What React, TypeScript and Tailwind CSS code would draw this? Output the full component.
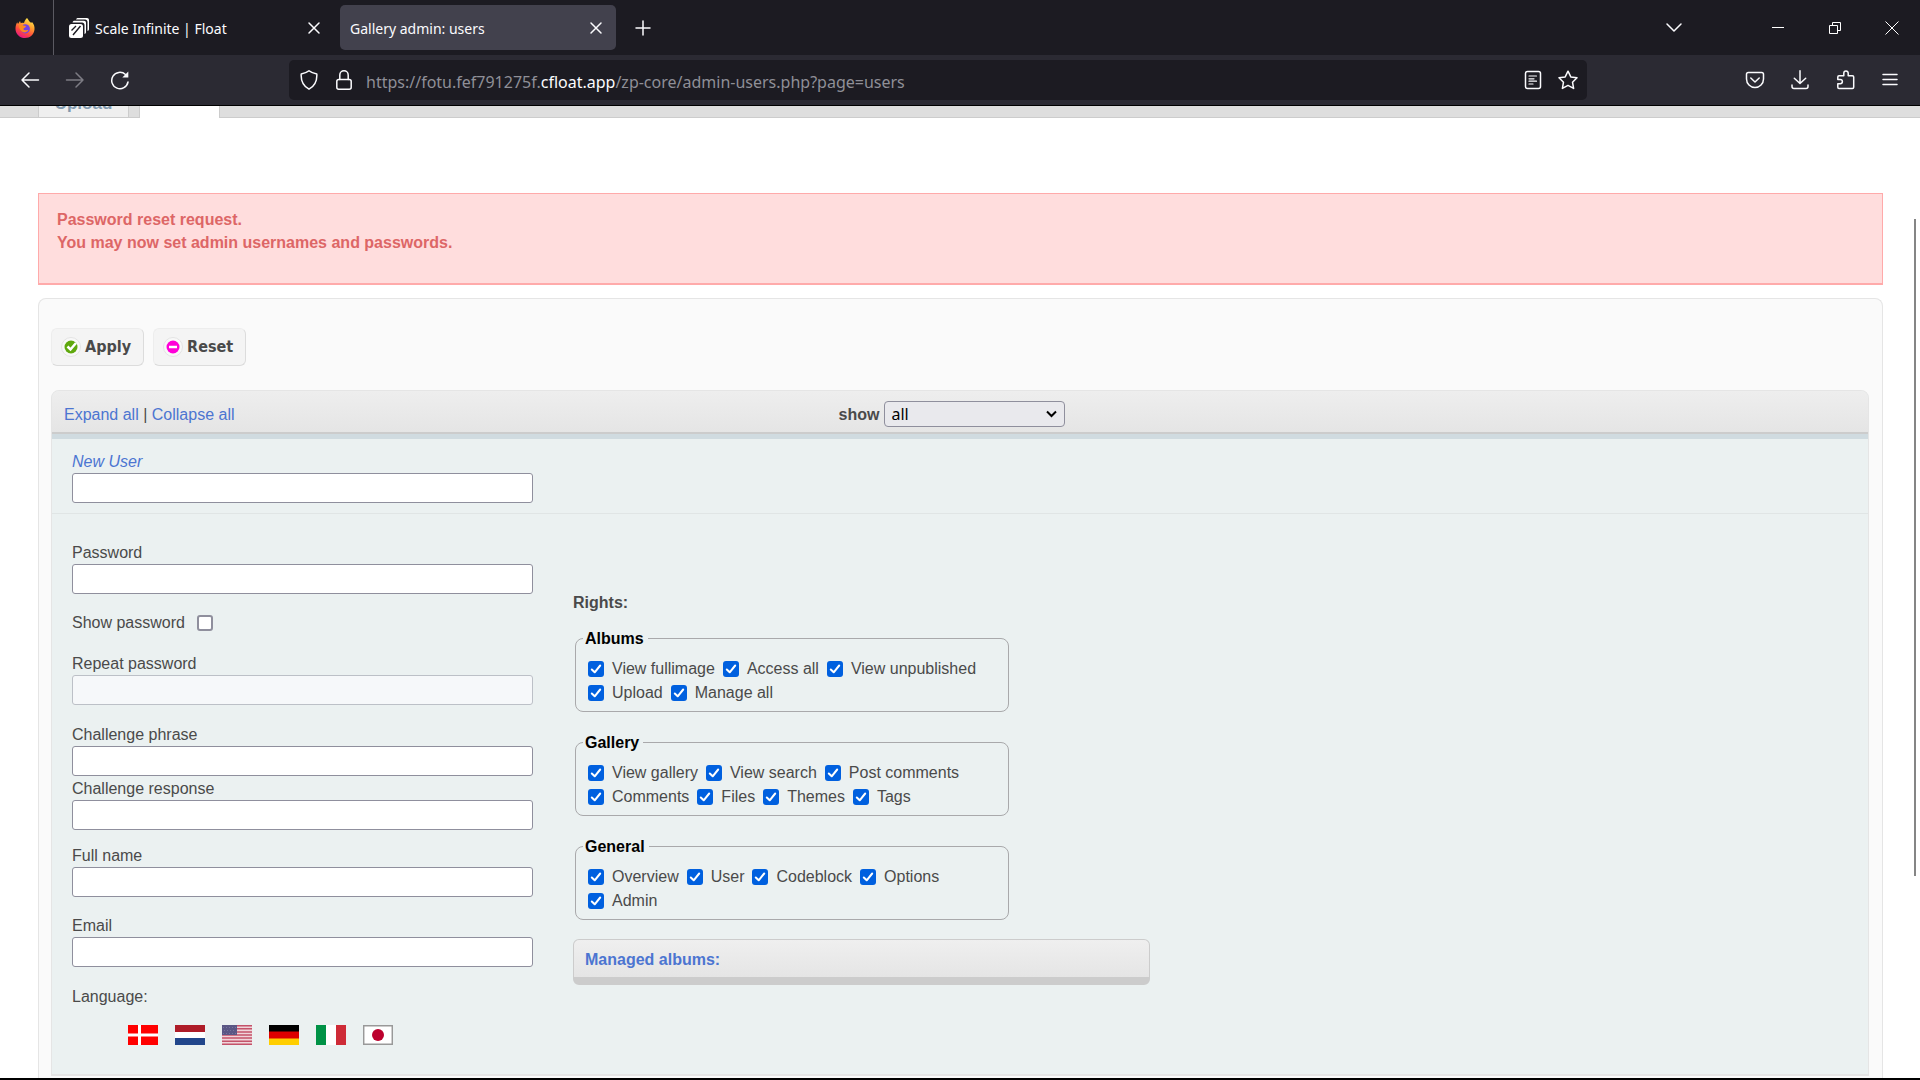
import { useState } from "react";
import type { ReactNode } from "react";

const rights = [
  { title: "Albums", items: ["View fullimage", "Access all", "View unpublished", "Upload", "Manage all"] },
  {
    title: "Gallery",
    items: ["View gallery", "View search", "Post comments", "Comments", "Files", "Themes", "Tags"],
  },
  { title: "General", items: ["Overview", "User", "Codeblock", "Options", "Admin"] },
];

const Icon = ({ size = 20, children }: { size?: number; children: ReactNode }) => (
  <svg
    width={size}
    height={size}
    viewBox="0 0 20 20"
    fill="none"
    stroke="currentColor"
    strokeWidth="1.5"
    strokeLinecap="round"
    strokeLinejoin="round"
    aria-hidden="true"
  >
    {children}
  </svg>
);

const IconButton = ({ label, className = "", children }: { label: string; className?: string; children: ReactNode }) => (
  <button type="button" aria-label={label} className={`flex h-10 items-center justify-center ${className}`}>
    {children}
  </button>
);

const FirefoxLogo = () => (
  <svg width="20" height="20" viewBox="0 0 20 20" aria-hidden="true">
    <defs>
      <linearGradient id="fox" x1="0.8" y1="0" x2="0.3" y2="1">
        <stop offset="0" stopColor="#fff44f" />
        <stop offset="0.4" stopColor="#ff9a2e" />
        <stop offset="0.7" stopColor="#ff4a3f" />
        <stop offset="1" stopColor="#e31587" />
      </linearGradient>
    </defs>
    <path
      d="M12 0c1.300 1.400 1.600 2.800 3 4 .8.700 1.600 1 2 0 2 2.300 2.800 4.700 2.500 7.500C19 16.500 15 20 10 20S.7 16.400.5 11.200C.400 8.500 1 6 2.200 4.200L3 6l2-3 .8 2.200C7 4.700 8 4.800 9 5c.6-2 1.500-3.600 3-5z"
      fill="url(#fox)"
    />
    <circle cx="10.300" cy="10.800" r="4.600" fill="#7542e5" />
    <path d="M4 7.500c1.500-1 3-1 4.500 0l2.500.4c-.3 1.500-1.600 1.600-2.300 2.400-.5 1 .2 2 1.500 2 1 0 2-.8 3 0-1 2-3.500 2.600-5.500 1.700S4 10.500 4 7.500z" fill="#ff8a1e" />
  </svg>
);

const FloatLogo = () => (
  <svg width="20" height="20" viewBox="0 0 20 20" aria-hidden="true">
    <path d="M7 1.500C7.400.5 8 0 9 0h9c1.200 0 2 .8 2 2v9c0 1-.5 1.800-1.500 2V4c0-1.500-1-2.500-2.500-2.500z" fill="#fff" />
    <path d="M3.500 4.500c.3-1.200 1-1.700 2-1.700h9.500c1.200 0 2 .8 2 2V14c0 1-.5 1.700-1.500 2V7c0-1.500-1-2.500-2.500-2.500z" fill="#fff" />
    <rect x="0" y="6" width="14" height="14" rx="2.500" fill="#fff" />
    <path d="M4 17 11.500 8M2.500 12.500 7 8" stroke="#1c1b22" strokeWidth="1.400" />
  </svg>
);

const CloseIcon = ({ size = 20 }: { size?: number }) => (
  <Icon size={size}>
    <path d="m5 5 10 10M15 5 5 15" />
  </Icon>
);

const Browser = () => (
  <header className="shrink-0 border-b border-black font-['Noto_Sans','Open_Sans',sans-serif] text-[#fbfbfe]">
    <div className="flex h-[55px] items-center bg-[#1c1b22] text-sm">
      <div className="flex h-full w-[54px] items-center justify-center border-r border-[#5b5a62] pr-1">
        <FirefoxLogo />
      </div>
      <div className="flex h-[45px] w-[286px] items-center pl-[15px] pr-4">
        <FloatLogo />
        <span className="ml-1.5 flex-1 truncate pt-0.5">Scale Infinite | Float</span>
        <button type="button" aria-label="Close tab">
          <CloseIcon />
        </button>
      </div>
      <div className="flex h-[45px] w-[276px] items-center rounded-[5px] bg-[#42414d] pl-2.5 pr-2.5">
        <span className="flex-1 truncate pt-0.5">Gallery admin: users</span>
        <button type="button" aria-label="Close tab">
          <CloseIcon />
        </button>
      </div>
      <IconButton label="New tab" className="w-[54px]">
        <Icon>
          <path d="M10 3v14M3 10h14" />
        </Icon>
      </IconButton>
      <div className="ml-auto flex">
        <IconButton label="List all tabs" className="mr-14 w-10">
          <Icon>
            <path d="m3 6 7 7 7-7" />
          </Icon>
        </IconButton>
        <IconButton label="Minimize" className="w-14">
          <svg width="12" height="12" aria-hidden="true">
            <path d="M0 5.500h12" stroke="#fff" />
          </svg>
        </IconButton>
        <IconButton label="Restore" className="w-[58px]">
          <svg width="12" height="12" fill="none" stroke="#fff" aria-hidden="true">
            <path d="M.5 3.500h8v8h-8zM3.500 3.500v-3h8v8h-3" />
          </svg>
        </IconButton>
        <IconButton label="Close" className="w-14">
          <svg width="14" height="14" stroke="#fff" aria-hidden="true">
            <path d="m.5.5 13 13M13.500.5l-13 13" />
          </svg>
        </IconButton>
      </div>
    </div>

    <nav className="flex h-[50px] items-center bg-[#2b2a33] pl-[7px] pr-2">
      <IconButton label="Back" className="w-[45px]">
        <Icon>
          <path d="M18.500 10H2M9 3l-7 7 7 7" />
        </Icon>
      </IconButton>
      <span className="text-[#7d7c84]">
        <IconButton label="Forward" className="w-[45px]">
          <Icon>
            <path d="M1.500 10H18M11 3l7 7-7 7" />
          </Icon>
        </IconButton>
      </span>
      <IconButton label="Reload" className="w-[45px]">
        <Icon>
          <path d="M18 12a8.200 8.200 0 1 1-2.500-7.500L17 6" />
          <path d="M18.300 1.500v6h-6z" fill="currentColor" stroke="none" />
        </Icon>
      </IconButton>
      <div className="ml-[147px] mr-[146px] flex h-10 flex-1 items-center rounded-[5px] bg-[#1c1b22] pl-2.5 pr-[9px]">
        <Icon>
          <path d="M10 .800c2 1.700 4.300 2.600 7.800 3.200.4 6.500-2 12-7.800 15.200C4.200 16 1.800 10.500 2.200 4 5.700 3.400 8 2.500 10 .800z" />
        </Icon>
        <span className="ml-[15px]">
          <Icon>
            <rect x="2.800" y="9.500" width="14.400" height="9.700" rx="2" />
            <path d="M5.800 9.500V5a4.200 4.200 0 0 1 8.400 0v4.500" />
          </Icon>
        </span>
        <div
          role="textbox"
          aria-label="Address"
          tabIndex={0}
          className="ml-3 flex-1 truncate pt-[3px] text-base text-[#8f8f97]"
        >
          https://fotu.fef791275f.<span className="text-[#fbfbfe]">cfloat.app</span>/zp-core/admin-users.php?page=users
        </div>
        <IconButton label="Reader view" className="mr-[15px] w-5">
          <Icon>
            <rect x="2.500" y="1.500" width="15" height="17" rx="2" />
            <path d="M6 6h7.500M6 8.800h5M6 11.200h7.500M6 14h4" strokeWidth="1.200" />
          </Icon>
        </IconButton>
        <IconButton label="Bookmark" className="w-5">
          <Icon>
            <path d="m10 1.200 2.800 5.700 6.200.9-4.500 4.400 1.100 6.200-5.600-3-5.600 3 1.100-6.200L1 7.800l6.200-.9z" />
          </Icon>
        </IconButton>
      </div>
      <IconButton label="Pocket" className="w-11">
        <Icon>
          <path d="M3.300 2.500h13.400c1 0 1.800.8 1.800 1.800V9a8.500 8.500 0 0 1-17 0V4.300c0-1 .8-1.800 1.800-1.800z" />
          <path d="m5.800 8 4.200 4 4.200-4" />
        </Icon>
      </IconButton>
      <IconButton label="Downloads" className="w-[46px]">
        <Icon>
          <path d="M10 .8v12.500M4.300 8.200l5.700 5.300 5.700-5.300M2 15v1.500c0 1.200.8 2 2 2h12c1.200 0 2-.8 2-2V15" />
        </Icon>
      </IconButton>
      <IconButton label="Extensions" className="w-[45px]">
        <Icon>
          <path d="M3 18.500c-.8 0-1.200-.5-1.200-1.200v-3.500h2.400a2.200 2.200 0 0 0 0-4.400H1.800V7c0-.8.500-1.200 1.200-1.200h4.800V3.200a2.200 2.200 0 0 1 4.400 0v2.600h4.300c.8 0 1.200.5 1.200 1.200v10.300c0 .7-.4 1.200-1.200 1.200z" />
        </Icon>
      </IconButton>
      <IconButton label="Menu" className="w-11">
        <Icon>
          <path d="M3 4.500h14M3 9.500h14M3 14.500h14" />
        </Icon>
      </IconButton>
    </nav>
  </header>
);

const Field = ({
  id,
  label,
  type = "text",
  disabled = false,
  className = "",
}: {
  id: string;
  label: ReactNode;
  type?: string;
  disabled?: boolean;
  className?: string;
}) => (
  <div className={className}>
    <label htmlFor={id} className="block pt-0.5 leading-[22px]">
      {label}
    </label>
    <input
      id={id}
      type={type}
      disabled={disabled}
      className="block h-[30px] w-full rounded-[3px] border border-[#8f8f9d] bg-white px-1 text-black disabled:border-[#bcc0c7] disabled:bg-[#f6f8fa]"
    />
  </div>
);

const Check = ({ label }: { label: string }) => {
  const [on, setOn] = useState(true);

  return (
    <label className="flex items-center whitespace-nowrap">
      <span className="relative mr-2 flex h-4 w-4">
        <input
          type="checkbox"
          checked={on}
          onChange={() => setOn(!on)}
          className="h-4 w-4 appearance-none rounded-[3px] border-2 border-[#8f8f9d] bg-white checked:border-0 checked:bg-[#0060df]"
        />
        {on && (
          <svg
            className="pointer-events-none absolute inset-0"
            width="16"
            height="16"
            fill="none"
            stroke="#fff"
            strokeWidth="2"
            strokeLinecap="round"
            strokeLinejoin="round"
            aria-hidden="true"
          >
            <path d="M3.800 8.500 6.700 11.300 12.200 4.500" />
          </svg>
        )}
      </span>
      {label}
    </label>
  );
};

const flags = [
  {
    name: "Dansk",
    art: (
      <>
        <path fill="#f00" d="M0 0h30v20H0z" />
        <path stroke="#fff" strokeWidth="3" d="M11.500 0v20M0 10h30" />
      </>
    ),
  },
  {
    name: "Nederlands",
    art: (
      <>
        <path fill="#ae1c28" d="M0 0h30v7H0z" />
        <path fill="#fff" d="M0 7h30v6H0z" />
        <path fill="#21468b" d="M0 13h30v7H0z" />
      </>
    ),
  },
  {
    name: "English",
    art: (
      <>
        <path fill="#f0d4d9" d="M0 0h30v20H0z" />
        <path
          stroke="#c4536a"
          strokeWidth="1.500"
          d="M0 .7h30M0 3.800h30M0 6.900h30M0 10h30M0 13.100h30M0 16.200h30M0 19.300h30"
        />
        <path fill="#5a5785" d="M0 0h15v10H0z" />
        <path stroke="#77759c" strokeDasharray="1 2" d="M1 2.500h13M2 5.500h12M1 8.500h13" />
      </>
    ),
  },
  {
    name: "Deutsch",
    art: (
      <>
        <path d="M0 0h30v7H0z" />
        <path fill="#d00" d="M0 6.500h30V14H0z" />
        <path fill="#ffce00" d="M0 13.500h30V20H0z" />
      </>
    ),
  },
  {
    name: "Italiano",
    art: (
      <>
        <path fill="#009246" d="M0 0h10v20H0z" />
        <path fill="#fff" d="M10 0h10v20H10z" />
        <path fill="#ce2b37" d="M20 0h10v20H20z" />
      </>
    ),
  },
  {
    name: "日本語",
    art: (
      <>
        <path fill="#fff" stroke="#999" strokeWidth="1.500" d="M.7.7h28.600v18.600H.7z" />
        <circle cx="15" cy="10" r="6" fill="#bc002d" />
      </>
    ),
  },
];

const Button = ({ type, icon, children }: { type: "submit" | "reset"; icon: ReactNode; children: ReactNode }) => (
  <button
    type={type}
    className="flex h-[38px] items-center rounded-md border border-[#ededed] border-r-[#dcdcdc] border-b-[#dcdcdc] bg-[#f4f4f4] pl-[9px] pr-3 font-['DejaVu_Sans_Condensed','DejaVu_Sans',sans-serif] font-bold text-[#4a4a4a]"
  >
    <svg width="20" height="20" viewBox="0 0 20 20" fill="none" className="mr-1" aria-hidden="true">
      <circle cx="10" cy="10" r="9.500" fill="#f8f8f8" stroke="#e4e4e4" />
      {icon}
    </svg>
    {children}
  </button>
);

const App = () => {
  const [show, setShow] = useState("all");

  return (
    <div className="flex h-screen flex-col overflow-hidden border-b-2 border-black bg-white font-['Liberation_Sans',Arial,sans-serif] text-base text-[#4a4a4a]">
      <Browser />

      <div className="relative flex min-h-0 flex-1 flex-col">
        <div className="flex h-3 shrink-0 items-end gap-2.5 border-b border-[#ccc] bg-[#dedede] pl-[38px]">
          <a
            href="#upload"
            className="flex h-[11px] w-[91px] items-end justify-center overflow-hidden border-x border-[#ccc] bg-[#efefef] pb-px text-[17px] font-bold leading-6 text-[#8199ae]"
          >
            Upload
          </a>
          <div className="-mb-px h-3 w-[81px] border-x border-[#ccc] bg-white" />
        </div>

        <main className="flex flex-1 flex-col pl-[38px] pr-[37px] pt-[75px]">
          <div
            role="alert"
            className="mb-[13px] h-[92px] shrink-0 border border-b-2 border-[#faa] bg-[#fdd] px-[18px] pt-3.5 font-bold leading-[23px] text-[#d66]"
          >
            Password reset request.
            <br />
            You may now set admin usernames and passwords.
          </div>

          <form
            onSubmit={(e) => e.preventDefault()}
            className="flex-1 rounded-t-lg border border-b-0 border-[#e5e5e5] bg-[#fafafa] px-3 pr-[13px] pt-[29px]"
          >
            <div className="mb-6 flex gap-[9px]">
              <Button
                type="submit"
                icon={
                  <>
                    <circle cx="10" cy="10" r="6.500" fill="#5fa80d" />
                    <path d="m6.500 9.500 3 3L15 6" stroke="#fff" strokeWidth="2.500" />
                  </>
                }
              >
                Apply
              </Button>
              <Button
                type="reset"
                icon={
                  <>
                    <circle cx="10" cy="10" r="6.500" fill="#ff00d8" />
                    <path d="M6 10h8" stroke="#fff" strokeWidth="2.500" />
                  </>
                }
              >
                Reset
              </Button>
            </div>

            <div className="rounded-t-lg border border-[#e5e5e5] border-b-2 bg-[#ebf1f1] leading-6">
              <div className="flex h-[43px] items-center rounded-t-[7px] border-b-2 border-[#ccc] bg-linear-to-b from-[#eeeeee] to-[#e5e5e5] pl-3 pr-7 pt-[7px]">
                <div className="flex-1 text-[#4a4a4a]">
                  <a href="#expand" className="text-[#4c75d1]">
                    Expand all
                  </a>{" "}
                  |{" "}
                  <a href="#collapse" className="text-[#4c75d1]">
                    Collapse all
                  </a>
                </div>
                <label htmlFor="show" className="mr-[5px] font-bold">
                  show
                </label>
                <div className="relative mb-0.5">
                  <select
                    id="show"
                    value={show}
                    onChange={(e) => setShow(e.target.value)}
                    className="block h-[26px] w-[181px] appearance-none rounded border border-[#8f8f9d] bg-[#e9e9ed] pl-1.5 font-['Noto_Sans',sans-serif] leading-6 text-black"
                  >
                    <option>all</option>
                    <option>users</option>
                  </select>
                  <svg
                    className="pointer-events-none absolute right-2 top-[9px]"
                    width="11"
                    height="8"
                    fill="none"
                    stroke="#000"
                    strokeWidth="2"
                    aria-hidden="true"
                  >
                    <path d="m1 1.500 4.500 4.500L10 1.500" />
                  </svg>
                </div>
                <div className="flex-1" />
              </div>
              <div className="h-[5px] bg-[#d0dbe0]" />

              <div className="border-b border-[#e0e5e5] px-5 py-2.5">
                <Field
                  id="user"
                  label={<em className="text-[#4c75d1]">New User</em>}
                  className="w-[461px] max-w-full"
                />
              </div>

              <div className="flex gap-10 px-5 pb-[29px] pt-[26px]">
                <div className="w-[461px]">
                  <Field id="password" type="password" label="Password" />
                  <div className="my-4 flex items-center gap-3 pt-px">
                    <label htmlFor="reveal">Show password</label>
                    <input
                      id="reveal"
                      type="checkbox"
                      className="h-4 w-4 appearance-none rounded-[3px] border-2 border-[#8f8f9d] bg-white checked:bg-[#0060df]"
                    />
                  </div>
                  <Field id="repeat" type="password" label="Repeat password" disabled />
                  <Field id="phrase" label="Challenge phrase" className="mt-[17px]" />
                  <Field id="response" label="Challenge response" />
                  <Field id="fullname" label="Full name" className="mt-[13px]" />
                  <Field id="email" type="email" label="Email" className="mt-4" />
                  <p className="mt-[17px] pt-0.5 leading-[22px]">Language:</p>
                  <ul className="ml-14 mt-[17px] flex gap-[17px]">
                    {flags.map((flag) => (
                      <li key={flag.name}>
                        <button type="button" aria-label={flag.name} className="block">
                          <svg width="30" height="20" viewBox="0 0 30 20" className="block">
                            {flag.art}
                          </svg>
                        </button>
                      </li>
                    ))}
                  </ul>
                </div>

                <div className="max-w-[577px] flex-1 pt-[51px]">
                  <p className="mb-[11px] font-bold">Rights:</p>
                  {rights.map((group) => (
                    <fieldset
                      key={group.title}
                      className="mb-[18px] ml-0.5 w-[434px] rounded-lg border border-[#a9a9ab] px-3 pb-1.5"
                    >
                      <legend className="-ml-[5px] px-0.5 pr-1 pt-0.5 font-bold leading-[22px] text-black">
                        {group.title}
                      </legend>
                      <div className="flex flex-wrap gap-x-2 pt-[7px]">
                        {group.items.map((item) => (
                          <Check key={item} label={item} />
                        ))}
                      </div>
                    </fieldset>
                  ))}
                  <button
                    type="button"
                    className="mt-[19px] block h-[46px] w-full rounded-md border border-b-8 border-[#ccc] bg-linear-to-b from-[#efefef] to-[#e5e5e5] px-[11px] pt-0.5 text-left font-bold text-[#4c75d1]"
                  >
                    Managed albums:
                  </button>
                </div>
              </div>
            </div>
          </form>
        </main>

        <div className="absolute bottom-[202px] right-1 top-[113px] w-0.5 bg-[#858585]" />
      </div>
    </div>
  );
};

export default App;
